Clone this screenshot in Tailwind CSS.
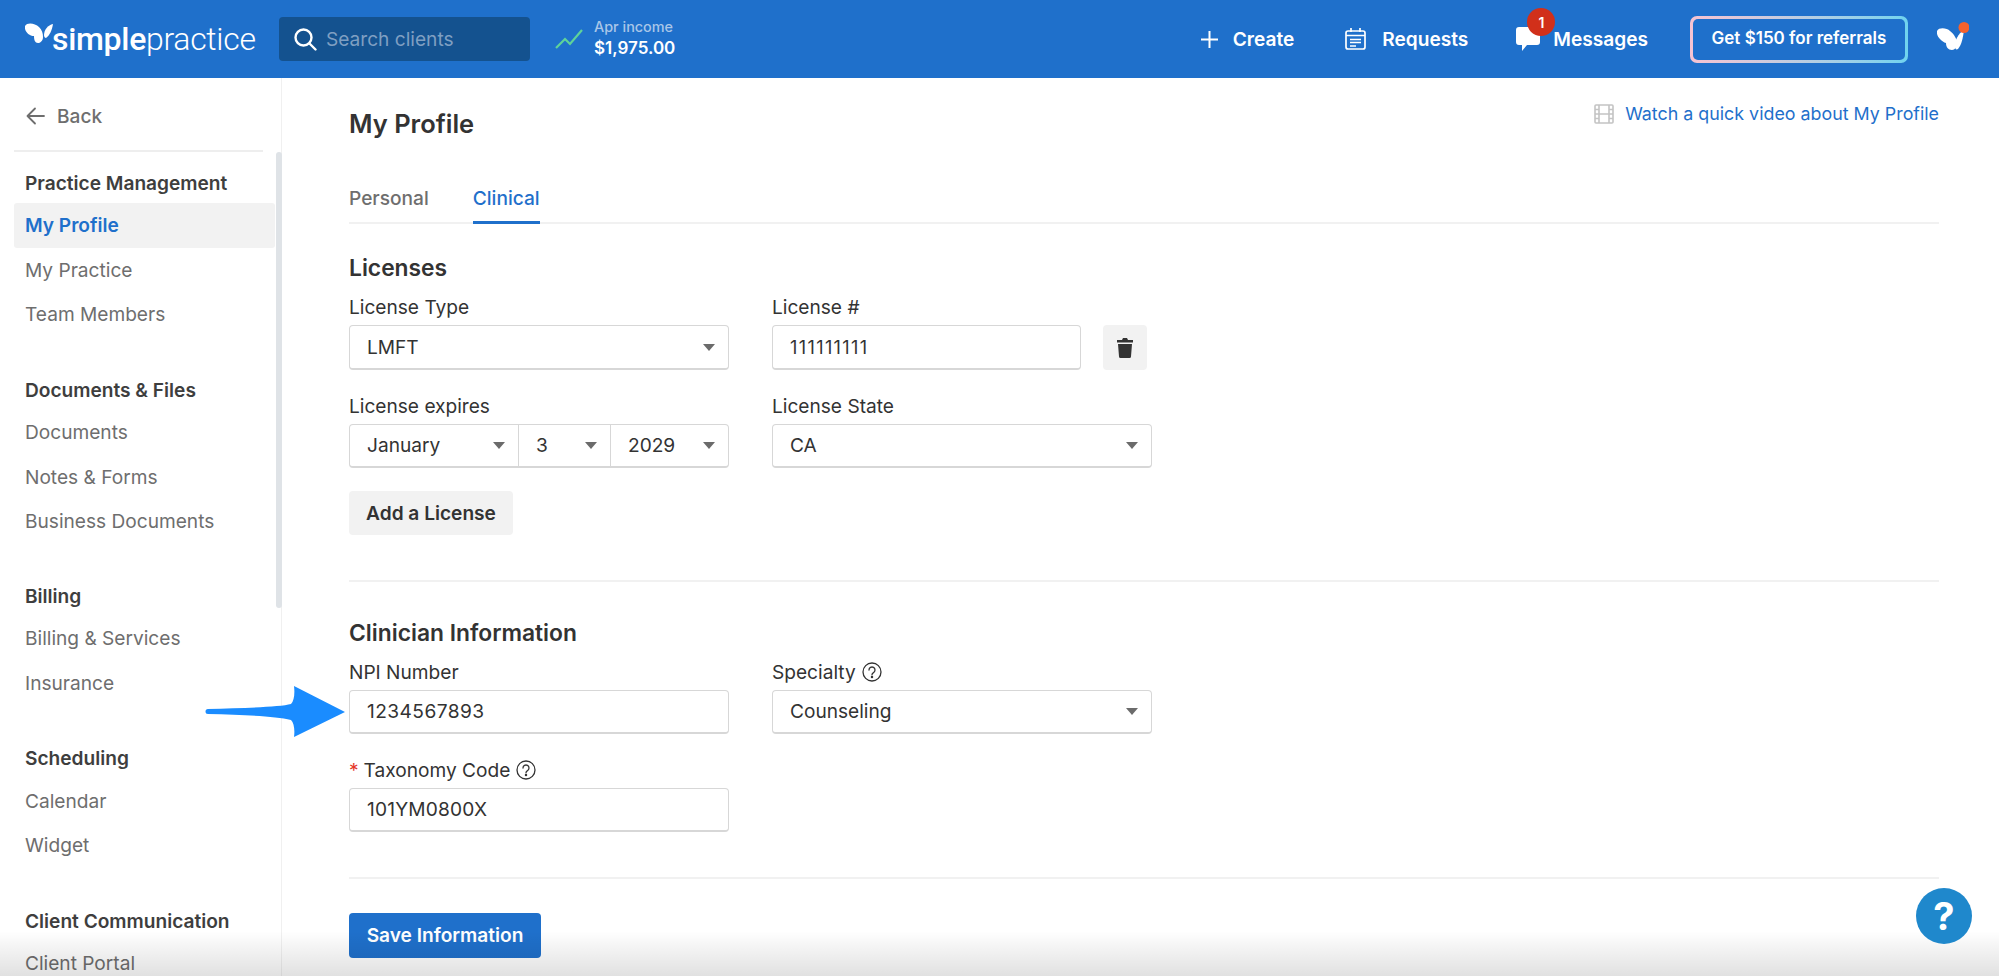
<!DOCTYPE html>
<html lang="en">
<head>
  <meta charset="UTF-8" />
  <title>My Profile</title>
  <script src="https://cdn.jsdelivr.net/npm/@tailwindcss/browser@4"></script>
</head>
<body class="relative h-[976px] overflow-hidden bg-white text-[#333] [font-family:Inter,sans-serif] text-[19.125px]">

  <!-- Header -->
  <header class="flex items-center h-[78px] bg-[#1f70cb] text-white">
    <div class="flex items-center ml-[25px] w-[254px]">
      <svg class="w-[28px] h-[20px] -mt-[12px]" viewBox="0 0 28 20" fill="#fff">
        <path d="M0 3C2-1 10 0 14 4c3 3 4 6 4 10 0 4-3 6-5 6-3 0-4-3-4-7C4 13-1 8 0 3z" />
        <path d="M28 1c-1 6-3 11-7 14-1 0-2-1-2-3 0-5 4-10 9-11z" />
      </svg>
      <span class="[font-family:Roboto,sans-serif] text-[32px] tracking-[-0.3px] leading-none -ml-[1px]"><span class="font-medium">simple</span><span class="font-light">practice</span></span>
    </div>
    <div class="flex items-center w-[251px] h-[44px] rounded-[4px] bg-[#14528f] pl-[14px]">
      <svg class="w-[24px] h-[24px]" viewBox="0 0 24 24" fill="none" stroke="#fff" stroke-width="2.4" stroke-linecap="round"><circle cx="10.500" cy="10.500" r="8" /><path d="M16.500 16.500l6 6" /></svg>
      <span class="ml-[9px] text-[#7f9fc2]">Search clients</span>
    </div>
    <svg class="ml-[25px] w-[28px] h-[20px]" viewBox="0 0 28 20" fill="none" stroke="#5fd39a" stroke-width="2.200"><path d="M1 19l9-9 5 5L27 1" /></svg>
    <div class="ml-[11px] -mt-[2px] flex flex-col">
      <span class="text-[14.400px] leading-[20px] font-medium text-[#a9c6e8]">Apr income</span>
      <span class="text-[17px] leading-[22px] font-semibold">$1,975.00</span>
    </div>

    <div class="ml-auto flex items-center font-semibold">
      <svg class="w-[17px] h-[17px]" viewBox="0 0 17 17" stroke="#fff" stroke-width="2"><path d="M8.500 0v17M0 8.500h17" /></svg>
      <span class="ml-[15px]">Create</span>
      <svg class="ml-[51px] w-[21px] h-[22px]" viewBox="0 0 21 22" fill="none" stroke="#fff" stroke-width="1.700"><rect x="1" y="3" width="19" height="18" rx="2" /><path d="M6 0v4M15 0v4M1 7.500h19M5 11.500h11M5 14.500h11M5 18h6" /></svg>
      <span class="ml-[16px]">Requests</span>
      <div class="relative ml-[48px] w-[24px] h-[24px]">
        <svg class="w-[24px] h-[24px]" viewBox="0 0 24 24" fill="#fff"><path d="M3 0h18a3 3 0 0 1 3 3v12a3 3 0 0 1-3 3H11l-5 6v-6H3a3 3 0 0 1-3-3V3a3 3 0 0 1 3-3z" /></svg>
        <span class="absolute -top-[19px] left-[11px] w-[28px] h-[28px] rounded-full bg-[#d1301a] flex items-center justify-center text-[14px]">1</span>
      </div>
      <span class="ml-[13px]">Messages</span>
      <div class="ml-[42px] w-[218px] h-[47px] p-[3px] rounded-[7px] bg-linear-to-r from-[#f6c3d2] to-[#6fd3ef]">
        <div class="w-full h-full rounded-[5px] bg-[#1f70cb] flex items-center justify-center text-[17px]">Get $150 for referrals</div>
      </div>
      <svg class="ml-[29px] mr-[30px] w-[32px] h-[28px] -mt-[6px]" viewBox="0 0 32 28" fill="#fff">
        <path d="M0 9c2-4 10-3 13 0 4 3 7 8 7 12 0 4-2 7-5 7-4 0-6-3-6-7C4 19-1 14 0 9z" />
        <path d="M27 8c-1 7-2 14-6 19-2 1-3 0-3-3 0-6 3-12 9-16z" />
        <circle cx="27" cy="5.500" r="5.500" fill="#f4622e" />
      </svg>
    </div>
  </header>

  <div class="flex h-[898px]">
    <!-- Sidebar -->
    <aside class="relative w-[282px] shrink-0 border-r border-[#f0f0f0] text-[#6e6e6e]">
      <div class="ml-[14px] w-[249px] h-[74px] border-b-2 border-[#eeeeee] flex items-center pl-[12px] pt-[4px] font-medium">
        <svg class="w-[19px] h-[18px]" viewBox="0 0 19 18" fill="none" stroke="#6e6e6e" stroke-width="1.800" stroke-linecap="round" stroke-linejoin="round"><path d="M18 9H1.500M9 1.500L1.500 9 9 16.500" /></svg>
        <span class="ml-[12px]">Back</span>
      </div>

      <nav class="mt-[11px]">
        <div class="pl-[25px] h-[40px] flex items-center font-semibold text-[#3e3e3e]">Practice Management</div>
        <div class="ml-[14px] w-[261px] pl-[11px] h-[44.700px] flex items-center rounded-[3px] bg-[#f2f2f2] text-[#1f70cb] font-semibold">My Profile</div>
        <div class="pl-[25px] h-[44.700px] flex items-center">My Practice</div>
        <div class="pl-[25px] h-[44.700px] flex items-center">Team Members</div>

        <div class="mt-[33px] pl-[25px] h-[40px] flex items-center font-semibold text-[#3e3e3e]">Documents &amp; Files</div>
        <div class="pl-[25px] h-[44.700px] flex items-center">Documents</div>
        <div class="pl-[25px] h-[44.700px] flex items-center">Notes &amp; Forms</div>
        <div class="pl-[25px] h-[44.700px] flex items-center">Business Documents</div>

        <div class="mt-[32px] pl-[25px] h-[40px] flex items-center font-semibold text-[#3e3e3e]">Billing</div>
        <div class="pl-[25px] h-[44.700px] flex items-center">Billing &amp; Services</div>
        <div class="pl-[25px] h-[44.700px] flex items-center">Insurance</div>

        <div class="mt-[33px] pl-[25px] h-[40px] flex items-center font-semibold text-[#3e3e3e]">Scheduling</div>
        <div class="pl-[25px] h-[44.700px] flex items-center">Calendar</div>
        <div class="pl-[25px] h-[44.700px] flex items-center">Widget</div>

        <div class="mt-[33px] pl-[25px] h-[40px] flex items-center font-semibold text-[#3e3e3e]">Client Communication</div>
        <div class="pl-[25px] h-[44.700px] flex items-center">Client Portal</div>
      </nav>
      <!-- scrollbar -->
      <div class="absolute top-[74px] right-[-1px] w-[6px] h-[456px] rounded-[3px] bg-[#dfe3e7]"></div>
    </aside>

    <!-- Main -->
    <main class="ml-[67px] w-[1590px]">
      <div class="flex justify-between items-start h-[98px]">
        <h1 class="pt-[29px] text-[25.500px] leading-[34px] font-semibold">My Profile</h1>
        <a class="pt-[24px] flex items-center text-[17.850px] leading-[24px] text-[#1f70cb]">
          <svg class="w-[20px] h-[20px]" viewBox="0 0 20 20" fill="none" stroke="#c4c4c4" stroke-width="1.600"><rect x="1" y="1" width="18" height="18" rx="1" /><path d="M5 1v18M15 1v18M5 10h10M1 5.500h4M1 10h4M1 14.500h4M15 5.500h4M15 10h4M15 14.500h4" /></svg>
          <span class="ml-[11px]">Watch a quick video about My Profile</span>
        </a>
      </div>

      <div class="flex gap-[44px] h-[48px] border-b-2 border-[#f1f1f1]">
        <div class="h-[48px] pt-[8px] text-[#6e6e6e] font-medium">Personal</div>
        <div class="h-[48px] pt-[8px] border-b-[3px] border-[#1f70cb] text-[#1f70cb] font-medium">Clinical</div>
      </div>

      <h2 class="mt-[29px] text-[22.800px] leading-[30px] font-semibold">Licenses</h2>
      <div class="mt-[12px] grid grid-cols-[380px_380px] gap-x-[43px] gap-y-[24px]">
        <div>
          <div class="h-[24px] leading-[24px] mb-[6px]">License Type</div>
          <div class="flex items-center justify-between h-[45px] pl-[17px] pr-[13px] border border-[#d7d7d7] border-b-2 rounded-[4px]">
            LMFT
            <svg class="w-[12px] h-[7px]" viewBox="0 0 12 7" fill="#6b6b6b"><path d="M0 0h12L6 7z" /></svg>
          </div>
        </div>
        <div>
          <div class="h-[24px] leading-[24px] mb-[6px]">License #</div>
          <div class="flex gap-[22px]">
            <div class="flex items-center w-[309px] h-[45px] pl-[17px] text-[18px] tracking-[1.400px] border border-[#d7d7d7] border-b-2 rounded-[4px]">111111111</div>
            <div class="flex items-center justify-center w-[44px] h-[45px] rounded-[4px] bg-[#f2f2f2]">
              <svg class="w-[16px] h-[20px]" viewBox="0 0 16 20" fill="#333"><path d="M6 0h4l1 2h5v2.500H0V2h5zM1 6h14l-1 12.500a1.500 1.500 0 0 1-1.500 1.500h-9A1.500 1.500 0 0 1 2 18.500z" /></svg>
            </div>
          </div>
        </div>
        <div>
          <div class="h-[24px] leading-[24px] mb-[6px]">License expires</div>
          <div class="flex h-[44px] border border-[#d7d7d7] border-b-2 rounded-[4px]">
            <div class="flex items-center justify-between w-[169px] pl-[17px] pr-[13px] border-r border-[#d7d7d7]">
              January
              <svg class="w-[12px] h-[7px]" viewBox="0 0 12 7" fill="#6b6b6b"><path d="M0 0h12L6 7z" /></svg>
            </div>
            <div class="flex items-center justify-between w-[92px] pl-[17px] pr-[13px] border-r border-[#d7d7d7]">
              3
              <svg class="w-[12px] h-[7px]" viewBox="0 0 12 7" fill="#6b6b6b"><path d="M0 0h12L6 7z" /></svg>
            </div>
            <div class="flex flex-1 items-center justify-between pl-[17px] pr-[13px]">
              2029
              <svg class="w-[12px] h-[7px]" viewBox="0 0 12 7" fill="#6b6b6b"><path d="M0 0h12L6 7z" /></svg>
            </div>
          </div>
        </div>
        <div>
          <div class="h-[24px] leading-[24px] mb-[6px]">License State</div>
          <div class="flex items-center justify-between h-[44px] pl-[17px] pr-[13px] border border-[#d7d7d7] border-b-2 rounded-[4px]">
            CA
            <svg class="w-[12px] h-[7px]" viewBox="0 0 12 7" fill="#6b6b6b"><path d="M0 0h12L6 7z" /></svg>
          </div>
        </div>
      </div>
      <button class="block mt-[23px] w-[164px] h-[44px] rounded-[4px] bg-[#f2f2f2] font-semibold">Add a License</button>

      <div class="mt-[45px] h-[2px] bg-[#f1f1f1]"></div>

      <h2 class="mt-[36px] text-[22.800px] leading-[30px] font-semibold">Clinician Information</h2>
      <div class="mt-[12px] grid grid-cols-[380px_380px] gap-x-[43px] gap-y-[24px]">
        <div>
          <div class="h-[24px] leading-[24px] mb-[6px]">NPI Number</div>
          <div class="flex items-center h-[44px] pl-[17px] tracking-[0.450px] border border-[#d7d7d7] border-b-2 rounded-[4px]">1234567893</div>
        </div>
        <div>
          <div class="flex items-center h-[24px] mb-[6px]">
            Specialty
            <svg class="ml-[6px] w-[20px] h-[20px]" viewBox="0 0 20 20" fill="none" stroke="#333" stroke-width="1.300"><circle cx="10" cy="10" r="9" /><path d="M7 8a3 3 0 1 1 4.500 2.600c-1 .6-1.500 1-1.500 2.200" stroke-linecap="round" /><circle cx="10" cy="15" r=".6" fill="#333" /></svg>
          </div>
          <div class="flex items-center justify-between h-[44px] pl-[17px] pr-[13px] border border-[#d7d7d7] border-b-2 rounded-[4px]">
            Counseling
            <svg class="w-[12px] h-[7px]" viewBox="0 0 12 7" fill="#6b6b6b"><path d="M0 0h12L6 7z" /></svg>
          </div>
        </div>
        <div>
          <div class="flex items-center h-[24px] mb-[6px]">
            <span class="text-[#e5372b] mr-[5px]">*</span>Taxonomy Code
            <svg class="ml-[6px] w-[20px] h-[20px]" viewBox="0 0 20 20" fill="none" stroke="#333" stroke-width="1.300"><circle cx="10" cy="10" r="9" /><path d="M7 8a3 3 0 1 1 4.500 2.600c-1 .6-1.500 1-1.500 2.200" stroke-linecap="round" /><circle cx="10" cy="15" r=".6" fill="#333" /></svg>
          </div>
          <div class="flex items-center h-[44px] pl-[17px] tracking-[0.200px] border border-[#d7d7d7] border-b-2 rounded-[4px]">101YM0800X</div>
        </div>
      </div>

      <div class="mt-[45px] h-[2px] bg-[#f1f1f1]"></div>
      <button class="block mt-[34px] w-[192px] h-[45px] rounded-[4px] bg-[#1f70cb] text-white font-semibold">Save Information</button>
    </main>
  </div>

  <!-- bottom fade -->
  <div class="absolute inset-x-0 bottom-0 h-[45px] bg-linear-to-b from-transparent to-black/12 pointer-events-none"></div>

  <!-- annotation arrow -->
  <svg class="absolute left-[205px] top-[686px] w-[141px] h-[52px]" viewBox="0 0 141 52" fill="#1a8cff"><path d="M3 23C40 22 75 21 86 18 89 15 90 8 89 0l51 26-51 25c1-7 0-14-3-17C70 30 40 29 3 28a2.500 2.500 0 0 1 0-5z" /></svg>

  <!-- help -->
  <div class="absolute left-[1916px] top-[888px] w-[56px] h-[56px] rounded-full bg-[#1f88cc] flex items-center justify-center text-white text-[38px] font-bold leading-none">?</div>
</body>
</html>
